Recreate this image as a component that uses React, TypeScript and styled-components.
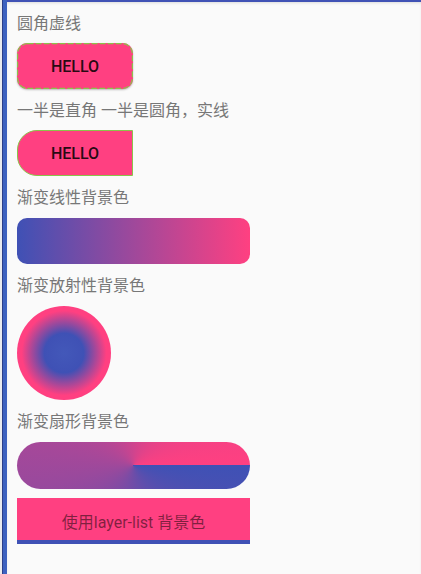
import React from 'react';
import styled, { createGlobalStyle } from 'styled-components';

const GlobalStyle = createGlobalStyle`
    html, body {
        margin: 0;
        padding: 0;
        background: #e9ebef;
    }
    #root {
        height: 574px;
    }
`;

const PINK = '#FF4081';
const BLUE = '#3F51B5';

const Frame = styled.div`
    display: flex;
    height: 574px;
    padding-left: 2px;
`;

const SideBar = styled.div`
    width: 4px;
    background: #3d62c0;
    border-left: 1px solid #2b3f8a;
`;

const Window = styled.div`
    flex: 1;
    display: flex;
    flex-direction: column;
    background: #fafafa;
    border-top: 2px solid #4052b5;
    box-shadow: inset 0 2px 3px -1px rgba(0, 0, 0, 0.12);
`;

const Content = styled.div`
    display: flex;
    flex-direction: column;
    align-items: flex-start;
    padding: 10px 0 0 10px;
`;

const Label = styled.div<{ first?: boolean }>`
    margin-top: ${(props) => (props.first ? '0' : '10px')};
    font-family: Roboto, 'Noto Sans CJK SC', sans-serif;
    font-size: 16px;
    line-height: 24px;
    color: #777777;
`;

const HelloButton = styled.div`
    position: relative;
    margin-top: 7px;
    width: 116px;
    height: 46px;
    display: flex;
    align-items: center;
    justify-content: center;
    background: ${PINK};
    font-family: Roboto, 'Liberation Sans', sans-serif;
    font-weight: 500;
    font-size: 16px;
    color: rgba(0, 0, 0, 0.87);
`;

const DashedButton = styled(HelloButton)`
    border-radius: 10px;
    box-shadow: 0 1px 2px rgba(0, 0, 0, 0.25);
`;

const HalfButton = styled(HelloButton)`
    box-sizing: border-box;
    border: 1px solid #8bc34a;
    border-radius: 20px 0 0 20px;
`;

const DashBorder = styled.svg`
    position: absolute;
    inset: 0;
    width: 100%;
    height: 100%;
    pointer-events: none;
`;

const LinearBar = styled.div`
    margin-top: 8px;
    width: 233px;
    height: 46px;
    border-radius: 10px;
    background: linear-gradient(to right, ${BLUE}, ${PINK});
`;

const RadialCircle = styled.div`
    margin-top: 8px;
    width: 94px;
    height: 94px;
    border-radius: 50%;
    background: radial-gradient(circle closest-side, #4358b9 0%, ${BLUE} 42%, ${PINK} 90%);
`;

const SweepBar = styled.div`
    margin-top: 8px;
    width: 233px;
    height: 47px;
    border-radius: 24px;
    background: conic-gradient(from 90deg at 50% 50%, ${BLUE}, ${PINK});
`;

const LayerBox = styled.div`
    box-sizing: border-box;
    margin-top: 9px;
    width: 233px;
    height: 46px;
    display: flex;
    align-items: center;
    justify-content: center;
    background: ${PINK};
    border-bottom: 4px solid ${BLUE};
    padding-top: 3px;
    font-family: Roboto, 'Noto Sans CJK SC', sans-serif;
    font-size: 16px;
    color: rgba(0, 0, 0, 0.5);
`;

const App = () => {
    return (
        <>
            <GlobalStyle />
            <Frame>
                <SideBar />
                <Window>
                    <Content>
                        <Label first>圆角虚线</Label>
                        <DashedButton>
                            HELLO
                            <DashBorder viewBox="0 0 116 46" preserveAspectRatio="none">
                                <rect
                                    x="0.6"
                                    y="0.6"
                                    width="114.8"
                                    height="44.8"
                                    rx="10"
                                    fill="none"
                                    stroke="#8bc34a"
                                    strokeWidth="1.2"
                                    strokeDasharray="6 2"
                                />
                            </DashBorder>
                        </DashedButton>
                        <Label>一半是直角 一半是圆角，实线</Label>
                        <HalfButton>HELLO</HalfButton>
                        <Label>渐变线性背景色</Label>
                        <LinearBar />
                        <Label>渐变放射性背景色</Label>
                        <RadialCircle />
                        <Label>渐变扇形背景色</Label>
                        <SweepBar />
                        <LayerBox>使用layer-list 背景色</LayerBox>
                    </Content>
                </Window>
            </Frame>
        </>
    );
};

export default App;
